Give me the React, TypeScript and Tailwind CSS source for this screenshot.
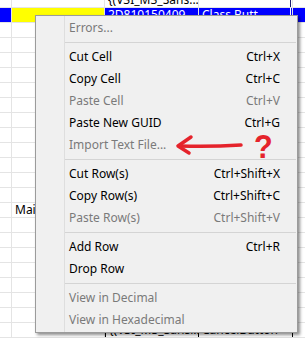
import React from "react";

type Item = { t: string; k?: string; d?: boolean } | "sep";

const items: Item[] = [
  { t: "Errors...", d: true },
  "sep",
  { t: "Cut Cell", k: "Ctrl+X" },
  { t: "Copy Cell", k: "Ctrl+C" },
  { t: "Paste Cell", k: "Ctrl+V", d: true },
  { t: "Paste New GUID", k: "Ctrl+G" },
  { t: "Import Text File...", d: true },
  "sep",
  { t: "Cut Row(s)", k: "Ctrl+Shift+X" },
  { t: "Copy Row(s)", k: "Ctrl+Shift+C" },
  { t: "Paste Row(s)", k: "Ctrl+Shift+V", d: true },
  "sep",
  { t: "Add Row", k: "Ctrl+R" },
  { t: "Drop Row" },
  "sep",
  { t: "View in Decimal", d: true },
  { t: "View in Hexadecimal", d: true },
];

function Cell({
  w,
  className = "",
  children,
}: {
  w: string;
  className?: string;
  children?: React.ReactNode;
}) {
  return (
    <div className={`${w} shrink-0 h-full border-r border-[#e4e4e4] overflow-hidden whitespace-nowrap pl-[3px] ${className}`}>
      {children}
    </div>
  );
}

function Row({ idx }: { idx: number }) {
  const first = idx === 0;
  const sel = idx === 1;
  const h = first ? "h-[8px]" : "h-[15px]";
  const bg0 = sel ? "bg-[#0000ff]" : "";
  const bg1 = sel ? "bg-[#ffff00]" : "";
  const bg2 = sel ? "bg-[#0000ff] text-white" : "";
  let c2: React.ReactNode = null;
  let c3: React.ReactNode = null;
  let c1: React.ReactNode = null;
  let c4: React.ReactNode = null;
  if (first) {
    c2 = <div className="leading-[15px] -mt-[8px]">{"{(V3I_M3_Sans..."}</div>;
    c4 = <div className="ml-[-3px] w-px h-full bg-[#1a1a6e]" />;
  }
  if (sel) {
    c2 = <div className="leading-[14px]">2D810150409...</div>;
    c3 = <div className="leading-[14px]">Class Butt...</div>;
    c4 = <div className="ml-[-3px] w-px h-full bg-white" />;
  }
  if (idx === 14) c1 = <div className="leading-[14px]">Main</div>;
  if (idx === 22) {
    c2 = <div className="leading-[14px]">{"{(V3I_M3_Sansi..."}</div>;
    c3 = <div className="leading-[14px]">CancelButton</div>;
  }
  const last = idx === 22;
  return (
    <div className={`flex ${h} border-b border-[#e4e4e4]`}>
      <Cell w="w-[12px]" className={`${bg0} pl-0`} />
      <Cell w="w-[93px]" className={bg1}>{c1}</Cell>
      <Cell w="w-[94px]" className={`${bg2} ${last ? "border-l border-l-black border-r-black" : ""}`}>{c2}</Cell>
      <Cell w="w-[94px]" className={`${bg2} ${last ? "border-r-black" : ""}`}>{c3}</Cell>
      <div className={`flex-1 h-full ${sel ? "bg-[#0000ff]" : ""}`}>{c4}</div>
    </div>
  );
}

export default function App() {
  const rows = Array.from({ length: 23 }, (_, i) => i);
  return (
    <div className="relative w-[305px] h-[338px] overflow-hidden bg-white font-['Noto_Sans',sans-serif] text-[12px] text-black">
      <div className="flex flex-col">
        {rows.map((i) => (
          <Row key={i} idx={i} />
        ))}
      </div>

      {/* context menu */}
      <div className="absolute left-[35px] top-[15px] w-[263px] h-[318px] border border-[#9b9b9b] bg-[#f0f0f0] py-px shadow-[2px_2px_3px_rgba(0,0,0,0.45)]">
        <div className="absolute left-[28px] top-0 bottom-0 w-px bg-[#dedede]" />
        {items.map((it, i) =>
          it === "sep" ? (
            <div key={i} className="h-[7px] flex items-center pl-[29px] pr-px">
              <div className="h-px w-full bg-[#d4d4d4]" />
            </div>
          ) : (
            <div
              key={i}
              className={`relative h-[22px] flex items-center justify-between pl-[33px] pr-[17px] whitespace-nowrap ${it.d ? "text-[#7a7a7a]" : "text-black"}`}
            >
              <span>{it.t}</span>
              {it.k && <span>{it.k}</span>}
            </div>
          )
        )}
      </div>

      {/* red annotation */}
      <svg className="absolute left-0 top-0" width="305" height="338">
        <path d="M241 145 Q210 147 180 146" stroke="#e5232b" strokeWidth="3.5" fill="none" strokeLinecap="round" />
        <path d="M191 137 L178 146 L189 153" stroke="#e5232b" strokeWidth="3.5" fill="none" strokeLinecap="round" strokeLinejoin="round" />
      </svg>
      <div className="absolute left-[254px] top-[129px] text-[34px] leading-[34px] font-bold text-[#e5232b] font-['Liberation_Sans',sans-serif] scale-x-[0.9] origin-left">
        ?
      </div>
    </div>
  );
}
